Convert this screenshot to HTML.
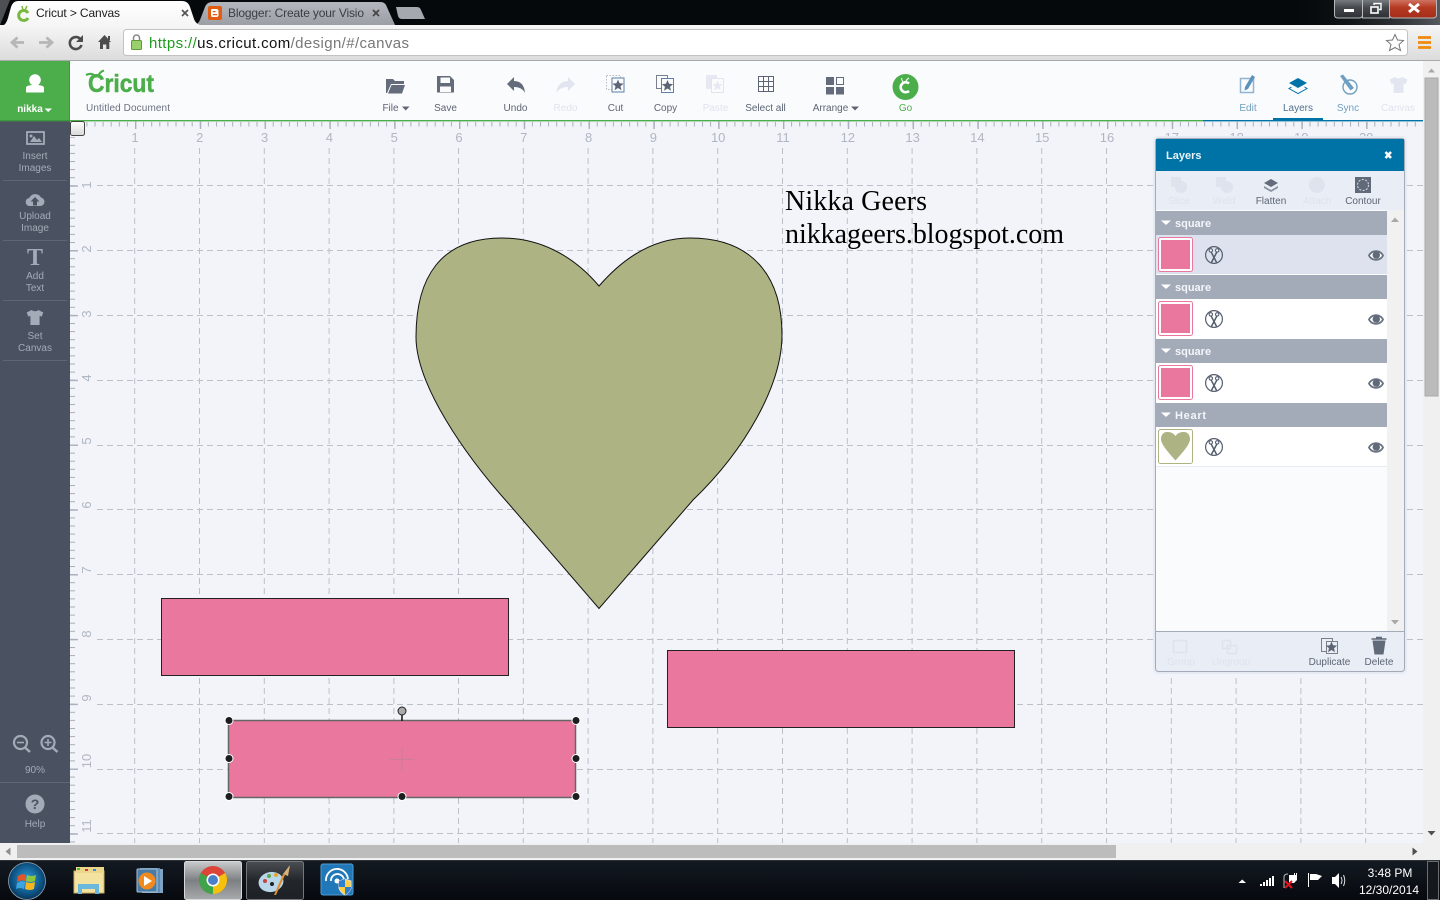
<!DOCTYPE html>
<html><head><meta charset="utf-8"><title>Cricut &gt; Canvas</title>
<style>
html,body{margin:0;padding:0;background:#f2f4f9;overflow:hidden;width:1440px;height:900px}
svg{display:block;position:absolute;left:0;top:0}
text{font-family:"Liberation Sans",sans-serif}
.l{font-size:10px;fill:#5d6574;text-anchor:middle}
.d{font-size:10px;fill:#dfe3ee;text-anchor:middle}
.s{font-size:10px;fill:#a3abb8;text-anchor:middle}
.b{font-size:10px;fill:#6f9fc0;text-anchor:middle}
.rn{font-size:13px;fill:#b0b6c3;text-anchor:middle}
.h{font-size:11px;font-weight:bold;fill:#f4f6fa}
.g{stroke:#bcc0c8;stroke-width:1;stroke-dasharray:6 4;fill:none}
</style></head><body>
<svg width="1440" height="900" viewBox="0 0 1440 900" xmlns="http://www.w3.org/2000/svg">
<defs>
<linearGradient id="tb" x1="0" y1="0" x2="0" y2="1"><stop offset="0" stop-color="#f6f6f6"/><stop offset="1" stop-color="#dcdcdc"/></linearGradient>
<linearGradient id="it" x1="0" y1="0" x2="0" y2="1"><stop offset="0" stop-color="#b4b7bd"/><stop offset="1" stop-color="#9b9fa6"/></linearGradient>
<linearGradient id="at" x1="0" y1="0" x2="0" y2="1"><stop offset="0" stop-color="#fff"/><stop offset="1" stop-color="#f5f5f5"/></linearGradient>
<linearGradient id="glass" x1="0" y1="0" x2="1" y2="0"><stop offset="0" stop-color="#06090c" stop-opacity="0"/><stop offset="1" stop-color="#555a5e"/></linearGradient>
<linearGradient id="rd" x1="0" y1="0" x2="0" y2="1"><stop offset="0" stop-color="#d98a7a"/><stop offset=".5" stop-color="#b53a22"/><stop offset="1" stop-color="#a52c18"/></linearGradient>
<linearGradient id="wb" x1="0" y1="0" x2="0" y2="1"><stop offset="0" stop-color="#8a8f94"/><stop offset=".5" stop-color="#45494e"/><stop offset="1" stop-color="#2c3034"/></linearGradient>
<linearGradient id="task" x1="0" y1="0" x2="0" y2="1"><stop offset="0" stop-color="#141a22"/><stop offset="1" stop-color="#06090e"/></linearGradient>
<linearGradient id="cb" x1="0" y1="0" x2="0" y2="1"><stop offset="0" stop-color="#c9cbcc"/><stop offset=".5" stop-color="#7d8082"/><stop offset="1" stop-color="#a8aaac"/></linearGradient>
<linearGradient id="pb" x1="0" y1="0" x2="0" y2="1"><stop offset="0" stop-color="#4a4e52"/><stop offset=".5" stop-color="#23272b"/><stop offset="1" stop-color="#1d2125"/></linearGradient>
<linearGradient id="box" x1="0" y1="0" x2="0" y2="1"><stop offset="0" stop-color="#fff"/><stop offset="1" stop-color="#d8d8d8"/></linearGradient>
<radialGradient id="orb" cx=".5" cy=".45" r=".6"><stop offset="0" stop-color="#2d9ed8"/><stop offset=".7" stop-color="#0c4f80"/><stop offset="1" stop-color="#0a2a44"/></radialGradient>
<pattern id="rt" x="135" y="122" width="8.1" height="8" patternUnits="userSpaceOnUse"><rect width="1" height="4.5" fill="#a8aebb"/></pattern>
<pattern id="rtm" x="135" y="121" width="64.8" height="9" patternUnits="userSpaceOnUse"><rect width="1.4" height="8" fill="#a8aebb"/></pattern>
<pattern id="rl" x="70" y="185.3" width="6" height="8.1" patternUnits="userSpaceOnUse"><rect width="5" height="1" fill="#a8aebb"/></pattern>
<pattern id="rlm" x="70" y="185.3" width="9" height="64.8" patternUnits="userSpaceOnUse"><rect width="8" height="1.4" fill="#a8aebb"/></pattern>
<symbol id="sc" viewBox="0 0 18 18" overflow="visible"><circle cx="9" cy="9" r="8.400" fill="none" stroke="#555e6e" stroke-width="1.200"/><path d="M5.600 5L11.600 16.500M12.400 5L6.400 16.500" stroke="#555e6e" stroke-width="1.500" fill="none"/><circle cx="5.800" cy="4.400" r="1.700" fill="#fff" stroke="#555e6e" stroke-width="1.100"/><circle cx="12.200" cy="4.400" r="1.700" fill="#fff" stroke="#555e6e" stroke-width="1.100"/></symbol>
<symbol id="ey" viewBox="0 0 16 12" overflow="visible"><path d="M0 6C3 -1 13 -1 16 6C13 13 3 13 0 6Z" fill="#6a7382"/><path d="M2 6C4.500 1.500 11.500 1.500 14 6C11.500 10.500 4.500 10.500 2 6Z" fill="#fff"/><circle cx="8.300" cy="5.600" r="3.700" fill="#616a79"/></symbol>
<symbol id="st" viewBox="0 0 12 12" overflow="visible"><path d="M6 .5L7.6 4.3 11.6 4.6 8.5 7.2 9.5 11.2 6 9 2.5 11.2 3.5 7.2 .4 4.6 4.4 4.3Z"/></symbol>
<symbol id="shirt" viewBox="0 0 20 18" overflow="visible"><path d="M6 0C7.5 2 12.5 2 14 0L20 3 18 8 15.5 7V18H4.5V7L2 8 0 3Z"/></symbol>
</defs>

<!-- title strip -->
<rect width="1440" height="26" fill="#06090c"/>
<rect x="1290" width="150" height="26" fill="url(#glass)"/>
<path d="M0 0H10L0 25Z" fill="#4d4f52"/>
<path d="M395 25L386 5Q384 2 380 2H212Q207 2 205 7L200 20Q198 25 193 25Z" fill="url(#it)"/>
<path d="M396 7H417Q420 7 421 10L425 19H402Q399 19 398 16Z" fill="#a5a9af"/>
<path d="M2 26Q6 25 8 18L11 7Q13 1 18 1H182Q188 1 190 7L194 19Q196 25 204 26Z" fill="url(#at)"/>
<path d="M27 6L25 10M22 6L23 10" stroke="#7ab93f" stroke-width="1.5" fill="none"/>
<path d="M28 13A5 5 0 1 0 28 18" stroke="#7ab93f" stroke-width="3" fill="none"/>
<text x="36" y="17" font-size="12" fill="#1c1c1c" textLength="84">Cricut &gt; Canvas</text>
<path d="M182 10L188 16M188 10L182 16" stroke="#555" stroke-width="1.7"/>
<rect x="208" y="6" width="14" height="14" rx="2" fill="#e05d12"/>
<path d="M212 9H216.5Q218.5 9 218.5 11.5V15Q218.5 17 216.5 17H212.5Q211 17 211 15V10.5Q211 9 212 9ZM212.8 11H215.5V12.2H212.8ZM212.8 14H217V15.2H212.8Z" fill="#fff" fill-rule="evenodd"/>
<text x="228" y="17" font-size="12" fill="#3a3d42" textLength="136">Blogger: Create your Visio</text>
<path d="M373 10L379 16M379 10L373 16" stroke="#444" stroke-width="1.7"/>

<!-- window buttons -->
<rect x="1334.5" y="-3" width="28" height="21" rx="3" fill="url(#wb)" stroke="#b7babc"/>
<rect x="1362.5" y="-3" width="27" height="21" fill="url(#wb)" stroke="#b7babc"/>
<rect x="1389.5" y="-3" width="47" height="21" rx="3" fill="url(#rd)" stroke="#b7babc"/>
<rect x="1344" y="9" width="10" height="3" fill="#fff"/>
<rect x="1371" y="7" width="7" height="6" fill="none" stroke="#fff" stroke-width="1.6"/><path d="M1374 5V3.5H1381V9.5H1379" fill="none" stroke="#fff" stroke-width="1.4"/>
<path d="M1409 4L1419 12M1419 4L1409 12" stroke="#fff" stroke-width="3"/>

<!-- browser toolbar -->
<rect y="25" width="1440" height="35" fill="url(#tb)"/>
<rect y="60" width="1440" height="1" fill="#a9a9a9"/>
<path d="M24 42.5H13M17.5 37.5L12 42.5 17.5 47.5" stroke="#b6b6b6" stroke-width="2.8" fill="none"/>
<path d="M39 42.5H51M46.5 37.5L52 42.5 46.5 47.5" stroke="#b6b6b6" stroke-width="2.8" fill="none"/>
<path d="M81 40A6 6 0 1 0 81.5 45" stroke="#4c4c4c" stroke-width="2.6" fill="none"/><path d="M83 35V42H76Z" fill="#4c4c4c"/>
<path d="M104.5 35L111 42H109.3V49H106.3V44.5H103V49H100V42H98Z" fill="#4c4c4c"/><rect x="108" y="36" width="2" height="4" fill="#4c4c4c"/>
<rect x="123.5" y="29.5" width="1284" height="26" rx="3" fill="#fff" stroke="#c2c2c2"/>
<path d="M133.500 41V38A3 3 0 0 1 139.500 38V41" fill="none" stroke="#888" stroke-width="1.500"/>
<rect x="131.500" y="40.500" width="10" height="9" rx="1" fill="#9ad06c" stroke="#5e9a3a"/>
<text x="149" y="48" font-size="15" textLength="260"><tspan fill="#1f9a1f">https://</tspan><tspan fill="#111">us.cricut.com</tspan><tspan fill="#777">/design/#/canvas</tspan></text>
<path d="M1395 34.500L1397.500 40 1403.500 40.500 1399 44.500 1400.500 50.500 1395 47.500 1389.500 50.500 1391 44.500 1386.500 40.500 1392.500 40Z" fill="#fff" stroke="#777" stroke-width="1"/>
<path d="M1418 37.500H1431M1418 42.500H1431M1418 47.500H1431" stroke="#ef8a0e" stroke-width="2.8"/>

<!-- app toolbar -->
<rect x="70" y="61" width="1353" height="60" fill="#fafbfd"/>
<rect y="61" width="70" height="60" fill="#4cae4b"/>
<rect x="69" y="61" width="1" height="60" fill="#3c963d"/>
<circle cx="35" cy="80" r="5.800" fill="#fff"/>
<path d="M26 92V88Q26 86 29 85.500L35 84.500 41 85.500Q44 86 44 88V92Q44 92.500 43 92.500H27Q26 92.500 26 92Z" fill="#fff"/>
<text x="30" y="112" font-size="10" font-weight="bold" fill="#fff" text-anchor="middle">nikka</text>
<path d="M44.500 108.500H52L48.200 112Z" fill="#fff"/>
<rect x="70" y="120" width="1133" height="1.400" fill="#4cae4b"/>
<rect x="1203" y="120" width="220" height="1.400" fill="#0073a6"/>
<rect x="1273" y="118" width="50" height="3" fill="#0073a6"/>

<!-- logo -->
<text x="88" y="92" font-size="25" font-weight="bold" fill="#4cae4b" stroke="#4cae4b" stroke-width=".5" textLength="66" lengthAdjust="spacingAndGlyphs">Cricut</text>
<path d="M86 75Q92 72 96 77M104 70.500Q99 72 98 77" stroke="#4cae4b" stroke-width="2.200" fill="none"/>
<text x="86" y="111" font-size="10" fill="#6a7180" textLength="84">Untitled Document</text>

<!-- toolbar icons -->
<path d="M386 79H393L395 81H404V84H391L387 93H386ZM391.500 85H405L402 93.500H388Z" fill="#646c7c"/>
<path d="M437 76H450L454 80V92.500H437ZM440.500 77.500V83H450V77.500ZM440 86.500V92H451V86.500Z" fill="#646c7c" fill-rule="evenodd"/>
<path d="M507 84L514 77V81Q524 81 525 93Q522 87 514 87V91Z" fill="#646c7c"/>
<path d="M575 84L568 77V81Q558 81 556 93Q560 87 568 87V91Z" fill="#e1e5f0"/>
<rect x="606.500" y="75.500" width="14" height="14" fill="none" stroke="#b6bac3" stroke-dasharray="1.500 1.500"/>
<rect x="612" y="78" width="12" height="14" fill="#fafbfd" stroke="#5f7fa8"/>
<use href="#st" x="612" y="79" width="12" height="12" fill="#5d6574"/>
<rect x="656.500" y="75.500" width="11" height="13" fill="none" stroke="#7a7f8a"/>
<rect x="661.500" y="78.500" width="12" height="14" fill="#fafbfd" stroke="#5f7fa8"/>
<use href="#st" x="661.500" y="79.500" width="12" height="12" fill="#5d6574"/>
<rect x="706" y="75" width="11" height="14" fill="#e6e9f2"/><rect x="711.500" y="78.500" width="12" height="14" fill="#fafbfd" stroke="#e1e5f0"/>
<use href="#st" x="712" y="80" width="11" height="11" fill="#e6e9f2"/>
<path d="M758.500 76.500H773.500V91.500H758.500ZM758.500 81.500H773.500M758.500 86.500H773.500M763.500 76.500V91.500M768.500 76.500V91.500" fill="none" stroke="#5d6574"/>
<rect x="826" y="77" width="8" height="8" fill="#646c7c"/><rect x="836.500" y="77.500" width="7" height="7" fill="none" stroke="#646c7c"/><rect x="826" y="87" width="8" height="7.500" fill="#646c7c"/><rect x="836" y="87" width="8" height="7.500" fill="#646c7c"/>
<circle cx="905.500" cy="87" r="13" fill="#4cae4b"/>
<path d="M909 83.500A5 5 0 1 0 909 91" stroke="#fff" stroke-width="2.600" fill="none"/><path d="M903 82Q901 79 902 78M906 81Q907 79 909 78" stroke="#fff" stroke-width="1" fill="none"/>
<rect x="1240.500" y="78.500" width="13" height="14" fill="none" stroke="#8fb4d2" stroke-width="1.500"/>
<path d="M1245 87L1252 75 1255 77 1248 89 1244.500 90.500Z" fill="#5c93bc"/>
<path d="M1298 78L1307 83 1298 88 1289 83Z" fill="#0073a6"/><path d="M1291.500 87L1289 88.500 1298 93.500 1307 88.500 1304.500 87" fill="none" stroke="#0073a6"/>
<circle cx="1350" cy="87" r="7" fill="none" stroke="#6f9fc0" stroke-width="1.400"/>
<path d="M1340 76L1343 74.500 1354 88 1350.500 90.500Z" fill="#6f9fc0"/>
<use href="#shirt" x="1389" y="77" width="19" height="16" fill="#e2e6f1"/>

<text class="l" x="390.500" y="111">File</text><path d="M402 106.500H409.500L405.700 110.500Z" fill="#5d6574"/>
<text class="l" x="445.500" y="111">Save</text>
<text class="l" x="515.500" y="111">Undo</text>
<text class="d" x="565.500" y="111">Redo</text>
<text class="l" x="615.500" y="111">Cut</text>
<text class="l" x="665.500" y="111">Copy</text>
<text class="d" x="715.500" y="111">Paste</text>
<text class="l" x="765.500" y="111">Select all</text>
<text class="l" x="830.500" y="111">Arrange</text><path d="M851 106.500H859L855 110.500Z" fill="#5d6574"/>
<text x="905.500" y="111" font-size="10" fill="#4cae4b" text-anchor="middle">Go</text>
<text class="b" x="1248" y="111">Edit</text>
<text class="l" x="1298" y="111" style="fill:#4f6f90">Layers</text>
<text class="b" x="1348" y="111">Sync</text>
<text class="d" x="1398" y="111">Canvas</text>

<!-- canvas -->
<rect x="70" y="121.500" width="1353" height="721.500" fill="#f2f4f9"/>
<rect x="74" y="122" width="1349" height="4.500" fill="url(#rt)"/>
<rect x="86" y="121" width="1337" height="8" fill="url(#rtm)"/>
<rect x="70" y="137" width="5" height="706" fill="url(#rl)"/>
<rect x="70" y="137" width="8" height="706" fill="url(#rlm)"/>
<rect x="70.500" y="121.500" width="14" height="14" rx="2" fill="url(#box)" stroke="#444"/>

<path class="g" d="M134.700 148V843M199.500 148V843M264.300 148V843M329.100 148V843M393.900 148V843M458.500 148V843M523.300 148V843M588.100 148V843M652.900 148V843M717.700 148V843M782.500 148V843M847.300 148V843M912.100 148V843M976.900 148V843M1041.700 148V843M1106.500 148V843M1171.300 148V843M1236.100 148V843M1300.900 148V843M1365.700 148V843"/>
<path class="g" d="M97 185.500H1423M97 250.500H1423M97 315.500H1423M97 380.500H1423M97 445.500H1423M97 509.500H1423M97 574.500H1423M97 639.500H1423M97 704.500H1423M97 769.500H1423M97 833.500H1423"/>

<text class="rn" x="135" y="142">1</text><text class="rn" x="199.800" y="142">2</text><text class="rn" x="264.600" y="142">3</text><text class="rn" x="329.400" y="142">4</text><text class="rn" x="394.200" y="142">5</text><text class="rn" x="459" y="142">6</text><text class="rn" x="523.800" y="142">7</text><text class="rn" x="588.600" y="142">8</text><text class="rn" x="653.400" y="142">9</text><text class="rn" x="718.200" y="142">10</text><text class="rn" x="783" y="142">11</text><text class="rn" x="847.800" y="142">12</text><text class="rn" x="912.600" y="142">13</text><text class="rn" x="977.400" y="142">14</text><text class="rn" x="1042.200" y="142">15</text><text class="rn" x="1107" y="142">16</text><text class="rn" x="1171.800" y="142">17</text><text class="rn" x="1236.600" y="142">18</text><text class="rn" x="1301.400" y="142">19</text><text class="rn" x="1366.200" y="142">20</text>
<text class="rn" transform="translate(91,185) rotate(-90)">1</text><text class="rn" transform="translate(91,249) rotate(-90)">2</text><text class="rn" transform="translate(91,314) rotate(-90)">3</text><text class="rn" transform="translate(91,378) rotate(-90)">4</text><text class="rn" transform="translate(91,441) rotate(-90)">5</text><text class="rn" transform="translate(91,505) rotate(-90)">6</text><text class="rn" transform="translate(91,570) rotate(-90)">7</text><text class="rn" transform="translate(91,634) rotate(-90)">8</text><text class="rn" transform="translate(91,698) rotate(-90)">9</text><text class="rn" transform="translate(91,761) rotate(-90)">10</text><text class="rn" transform="translate(91,826) rotate(-90)">11</text>

<!-- shapes -->
<path d="M599 286C572 254 538 238 502 238C440 238 416 278 416 337C416 385 465 455 508 503L599 608.500L693 500C745 450 782 385 782 335C782 276 752 238 690 238C655 238 625 256 599 286Z" fill="#adb383" stroke="#111" stroke-width="1"/>
<rect x="161.500" y="598.500" width="347" height="77" fill="#ea779d" stroke="#222"/>
<rect x="667.500" y="650.500" width="347" height="77" fill="#ea779d" stroke="#222"/>
<rect x="228.500" y="720.500" width="347" height="77" fill="#ea779d" stroke="#666" stroke-width="1.500"/>
<path d="M390 759.500H414M402 747V772" stroke="#c88098" stroke-width="1"/>
<path d="M402 714V721" stroke="#111" stroke-width="1.500"/>
<circle cx="402" cy="711" r="4" fill="#aaa" stroke="#222"/>
<g fill="#1d1d1d" stroke="#fff" stroke-width="1">
<circle cx="229" cy="720.500" r="4"/><circle cx="576" cy="720.500" r="4"/><circle cx="229" cy="758.500" r="4"/><circle cx="576" cy="758.500" r="4"/><circle cx="229" cy="796.500" r="4"/><circle cx="402" cy="796.500" r="4"/><circle cx="576" cy="796.500" r="4"/>
</g>
<text x="785" y="210" font-size="28" fill="#000" style="font-family:'Liberation Serif',serif" textLength="142">Nikka Geers</text>
<text x="785" y="243" font-size="28" fill="#000" style="font-family:'Liberation Serif',serif" textLength="279">nikkageers.blogspot.com</text>

<!-- sidebar -->
<rect y="121" width="70" height="722" fill="#4a5261"/>
<rect y="120" width="70" height="1.400" fill="#3c963d"/>
<g fill="#5f6777"><rect x="3" y="180" width="64" height="1"/><rect x="3" y="240" width="64" height="1"/><rect x="3" y="300" width="64" height="1"/><rect x="3" y="360" width="64" height="1"/><rect y="782" width="70" height="1"/></g>
<rect x="27" y="132" width="17" height="12" fill="none" stroke="#a3abb8" stroke-width="1.800"/><path d="M30 142L34 136 37 140 39 138 42 142Z" fill="#a3abb8"/><circle cx="31" cy="136" r="1.500" fill="#a3abb8"/>
<path d="M30 206A4 4 0 0 1 29.300 198A6.500 6.500 0 0 1 41 197.500A4.300 4.300 0 0 1 40.500 206Z" fill="#a3abb8"/><path d="M35 197L39.500 201.500H37V205.500H33V201.500H30.500Z" fill="#4a5261"/>
<text x="35" y="265" font-size="24" font-weight="bold" fill="#a3abb8" text-anchor="middle" style="font-family:'Liberation Serif',serif">T</text>
<use href="#shirt" x="26" y="310" width="18" height="15" fill="#a3abb8"/>
<text class="s" x="35" y="159">Insert</text><text class="s" x="35" y="171">Images</text>
<text class="s" x="35" y="219">Upload</text><text class="s" x="35" y="231">Image</text>
<text class="s" x="35" y="279">Add</text><text class="s" x="35" y="291">Text</text>
<text class="s" x="35" y="339">Set</text><text class="s" x="35" y="351">Canvas</text>
<circle cx="20.500" cy="742.500" r="6.500" fill="none" stroke="#a3abb8" stroke-width="2.200"/><path d="M25 747.500L30 752" stroke="#a3abb8" stroke-width="2.500"/><path d="M17 742.500H24" stroke="#a3abb8" stroke-width="1.600"/>
<circle cx="48" cy="742.500" r="6.500" fill="none" stroke="#a3abb8" stroke-width="2.200"/><path d="M52.500 747.500L57.500 752" stroke="#a3abb8" stroke-width="2.500"/><path d="M44.500 742.500H51.500M48 739V746" stroke="#a3abb8" stroke-width="1.600"/>
<text class="s" x="35" y="773">90%</text>
<circle cx="35" cy="804" r="9.500" fill="#a3abb8"/>
<text x="35" y="809" font-size="14" font-weight="bold" fill="#4a5261" text-anchor="middle">?</text>
<text class="s" x="35" y="827">Help</text>

<!-- layers panel -->
<rect x="1153" y="136" width="254" height="538" rx="5" fill="#e6eaf3"/>
<rect x="1155.500" y="138.500" width="249" height="533" rx="3" fill="#e9edf5" stroke="#a3abb8"/>
<rect x="1156" y="139" width="248" height="32" fill="#0073a6"/>
<text x="1166" y="159" font-size="11" font-weight="bold" fill="#e9f3f8">Layers</text>
<path d="M1385.500 152L1391 158M1391 152L1385.500 158" stroke="#fff" stroke-width="2.500"/>
<rect x="1171" y="177" width="10" height="10" fill="#dfe3ee"/><circle cx="1181" cy="187" r="6" fill="#dfe3ee"/>
<rect x="1216" y="177" width="10" height="10" fill="#dfe3ee"/><circle cx="1227" cy="187" r="6" fill="#dfe3ee"/>
<path d="M1271 179L1278 183 1271 187 1264 183Z" fill="#646c7c"/><path d="M1264 186L1271 190 1278 186 1278 188 1271 192 1264 188Z" fill="#8a919e"/>
<circle cx="1317" cy="185" r="8" fill="#dfe3ee"/>
<rect x="1355" y="177" width="16" height="16" fill="#616a79"/><circle cx="1363" cy="185" r="5.500" fill="none" stroke="#d9dde6" stroke-dasharray="2 1.500"/>
<text class="d" x="1179" y="204">Slice</text><text class="d" x="1224" y="204">Weld</text><text class="l" x="1271" y="204">Flatten</text><text class="d" x="1317" y="204">Attach</text><text class="l" x="1363" y="204">Contour</text>

<rect x="1156" y="210" width="248" height="422" fill="#fafbfd"/>
<rect x="1387" y="210" width="17" height="421" fill="#f1f1f1"/>
<path d="M1391 222H1399L1395 217.500Z" fill="#a8a8a8"/><path d="M1391 620H1399L1395 624.500Z" fill="#a8a8a8"/>

<g fill="#a3abb8"><rect x="1156" y="211" width="231" height="24"/><rect x="1156" y="275" width="231" height="24"/><rect x="1156" y="339" width="231" height="24"/><rect x="1156" y="403" width="231" height="24"/></g>
<rect x="1156" y="235" width="231" height="39" fill="#dde2ee"/>
<rect x="1156" y="299" width="231" height="40" fill="#fff"/>
<rect x="1156" y="363" width="231" height="40" fill="#fff"/>
<rect x="1156" y="427" width="231" height="39" fill="#fff"/><rect x="1156" y="466" width="231" height="1" fill="#e6eaf3"/>
<g fill="#fff"><path d="M1161 220.500H1171L1166 225Z"/><path d="M1161 284.500H1171L1166 289Z"/><path d="M1161 348.500H1171L1166 353Z"/><path d="M1161 412.500H1171L1166 417Z"/></g>
<text class="h" x="1175" y="227">square</text><text class="h" x="1175" y="291">square</text><text class="h" x="1175" y="355">square</text><text class="h" x="1175" y="419" textLength="31">Heart</text>

<g fill="#fff" stroke="#ea779d"><rect x="1158.500" y="237.500" width="34" height="34" rx="2"/><rect x="1158.500" y="301.500" width="34" height="34" rx="2"/><rect x="1158.500" y="365.500" width="34" height="34" rx="2"/></g>
<g fill="#ea779d"><rect x="1161" y="240" width="29" height="29"/><rect x="1161" y="304" width="29" height="29"/><rect x="1161" y="368" width="29" height="29"/></g>
<rect x="1158.500" y="429.500" width="34" height="34" rx="2" fill="#fff" stroke="#adb383"/>
<path d="M1175.500 436C1178 432.500 1181 432 1184 432C1187.500 432 1190 435 1190 439C1190 444 1184 451 1175.500 460.500C1167 451 1161 444 1161 439C1161 435 1163.500 432 1167 432C1170 432 1173 432.500 1175.500 436Z" fill="#adb383"/>
<use href="#sc" x="1205" y="246" width="18" height="18"/><use href="#sc" x="1205" y="310" width="18" height="18"/><use href="#sc" x="1205" y="374" width="18" height="18"/><use href="#sc" x="1205" y="438" width="18" height="18"/>
<use href="#ey" x="1368" y="249.500" width="16" height="12"/><use href="#ey" x="1368" y="313.500" width="16" height="12"/><use href="#ey" x="1368" y="377.500" width="16" height="12"/><use href="#ey" x="1368" y="441.500" width="16" height="12"/>

<rect x="1156" y="631" width="248" height="1" fill="#a3abb8"/>
<rect x="1173.500" y="640.500" width="13" height="12" fill="none" stroke="#dfe3ee" stroke-width="1.500"/>
<rect x="1222.500" y="640.500" width="8" height="8" fill="none" stroke="#dfe3ee" stroke-width="1.500"/><rect x="1227.500" y="645.500" width="9" height="8" fill="none" stroke="#dfe3ee" stroke-width="1.500"/>
<rect x="1321.500" y="638.500" width="11" height="13" fill="none" stroke="#7a7f8a"/><rect x="1326.500" y="641.500" width="11" height="12" fill="#e9edf5" stroke="#7a7f8a"/>
<use href="#st" x="1325.500" y="641" width="12" height="12" fill="#5d6574"/>
<path d="M1372.500 640.500H1385.500L1383.500 654.500H1374.500Z" fill="#616a79"/><path d="M1371.500 639H1386.500M1376 637.500H1382" stroke="#616a79" stroke-width="1.500"/>
<text class="d" x="1181" y="665">Group</text><text class="d" x="1231" y="665">Ungroup</text><text class="l" x="1329.500" y="665">Duplicate</text><text class="l" x="1379" y="665">Delete</text>

<!-- scrollbars -->
<rect x="1423" y="61" width="17" height="799" fill="#f0f0f0"/>
<rect x="1425" y="78" width="13" height="318" fill="#bbb" stroke="#aaa"/>
<path d="M1428 72.500H1435L1431.500 68.500Z" fill="#a8a8a8"/>
<path d="M1427.500 831H1435.500L1431.500 835.500Z" fill="#505050"/>
<rect y="843" width="1423" height="17" fill="#f0f0f0"/>
<rect x="17" y="845" width="1099" height="13" fill="#bcbcbc"/>
<path d="M10.500 847.500V855.500L5.500 851.500Z" fill="#8f8f8f"/>
<path d="M1412.500 847.500V855.500L1417.500 851.500Z" fill="#505050"/>

<!-- taskbar -->
<rect y="860" width="1440" height="40" fill="url(#task)"/>
<rect y="860" width="1440" height="1" fill="#2c3238"/>
<circle cx="27" cy="881" r="18.500" fill="url(#orb)" stroke="#8fa3b5" stroke-width=".8"/>
<path d="M18 876Q22 873 26 875L25 881Q21 879 17 882Z" fill="#e5552b"/><path d="M27 875Q31 877 36 875L35 881Q31 883 26 881Z" fill="#8cc63f"/><path d="M17 883Q21 880 25 882L24 889Q20 887 16 889Z" fill="#3ca5e0"/><path d="M26 882Q30 884 35 882L34 889Q30 891 25 889Z" fill="#f7b520"/>
<path d="M74 871H104V893H74Z" fill="#f4e2a0" stroke="#c9ae66"/><rect x="76" y="867" width="28" height="6" fill="#ecd68c"/>
<rect x="77" y="868" width="3" height="2" fill="#3cc13c"/><rect x="85" y="869" width="3" height="2" fill="#d43a2f"/><rect x="93" y="869" width="3" height="2" fill="#2f8fe0"/>
<path d="M78 884H99V894H95V889H82V894H78Z" fill="#6bb8de"/>
<rect x="142" y="869" width="21" height="24" fill="#7fa3c4"/><rect x="140" y="868" width="20" height="24" fill="#5f8db5"/><rect x="137" y="869" width="20" height="23" rx="1" fill="#4a7ba6" stroke="#aac4db"/>
<circle cx="147" cy="881" r="8.500" fill="#f08a1e"/><path d="M144 876L152 881 144 886Z" fill="#fff"/>
<rect x="184.500" y="861.500" width="57" height="38" rx="2" fill="url(#cb)" stroke="#d6d8d9"/>
<circle cx="213" cy="880" r="14" fill="#db4437"/>
<path d="M213 880L225.100 873A14 14 0 0 1 213 894Z" fill="#f4c20d"/>
<path d="M213 880L213 894A14 14 0 0 1 200.900 873Z" fill="#3fa34a"/>
<circle cx="213" cy="880" r="6.500" fill="#fff"/><circle cx="213" cy="880" r="5" fill="#4a7fc9"/>
<rect x="246.500" y="861.500" width="57" height="38" rx="2" fill="url(#pb)" stroke="#74787b"/>
<ellipse cx="271" cy="882" rx="12.500" ry="10" fill="#b9d6ea" transform="rotate(-10 271 882)"/>
<circle cx="265" cy="881" r="2" fill="#c8443a"/><circle cx="269" cy="876" r="2" fill="#5da84a"/><circle cx="276" cy="875" r="2" fill="#e8a52b"/><circle cx="272" cy="884" r="2" fill="#222"/>
<path d="M274 895L283 874 285 875 276 895Z" fill="#e09030"/><path d="M283 874L290 865 288 876Z" fill="#d8b07a"/>
<rect x="321" y="864" width="32" height="31" rx="2" fill="#2178b8" stroke="#4f9dd4"/>
<path d="M326 881A11 11 0 0 1 348 879" stroke="#fff" stroke-width="1.800" fill="none"/><path d="M331 881A6.500 6.500 0 0 1 344 880" stroke="#fff" stroke-width="1.800" fill="none"/><circle cx="337" cy="881" r="2.500" fill="#fff"/>
<path d="M339 881L345 879 351 881V888Q350 892 345 895Q340 892 339 888Z" fill="#ffcf3f" stroke="#ddd"/><path d="M345 879V887H339V881ZM345 887H351V888Q350 892 345 895Z" fill="#2f7fd0"/>

<path d="M1238.500 883H1246L1242.200 879.500Z" fill="#fff"/>
<g fill="#fff"><rect x="1260" y="884" width="2" height="2"/><rect x="1263" y="882" width="2" height="4"/><rect x="1266" y="880" width="2" height="6"/><rect x="1269" y="878" width="2" height="8"/><rect x="1272" y="876" width="2" height="10"/></g>
<path d="M1289 875H1294V873H1295V875H1296V873H1297V880L1294 883H1289Z" fill="#fff"/><path d="M1284 888V877Q1284 874 1288 874" stroke="#bbb" fill="none"/>
<path d="M1285 881L1292 888M1292 881L1285 888" stroke="#e8101a" stroke-width="2"/>
<path d="M1308.500 873V887" stroke="#fff"/><path d="M1310 874H1316L1322 876 1318 880H1310Z" fill="#fff"/>
<path d="M1332 877H1335L1339 873V888L1335 884H1332Z" fill="#fff"/><path d="M1341 877Q1343 880.500 1341 884M1343.500 875Q1346 880.500 1343.500 886" stroke="#ddd" fill="none"/>
<text x="1390" y="877" font-size="12" fill="#fff" text-anchor="middle">3:48 PM</text>
<text x="1389" y="894" font-size="12" fill="#fff" text-anchor="middle">12/30/2014</text>
<rect x="1427.500" y="861.500" width="11" height="38" fill="#15191e" stroke="#6a6e72"/>
</svg>
</body></html>
